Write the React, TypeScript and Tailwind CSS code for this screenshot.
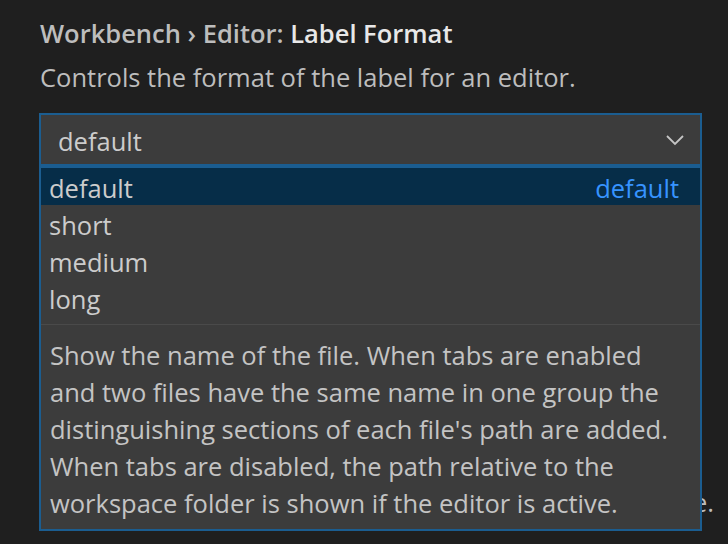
import React from "react";

const lines = [
  "Show the name of the file. When tabs are enabled",
  "and two files have the same name in one group the",
  "distinguishing sections of each file's path are added.",
  "When tabs are disabled, the path relative to the",
  "workspace folder is shown if the editor is active.",
];

const options = ["default", "short", "medium", "long"];

export default function App() {
  return (
    <div className="relative w-[728px] h-[544px] overflow-hidden bg-[#1f1f1f] pl-[39px] pr-[26px] pt-[18px] font-['Open_Sans',sans-serif] text-[25.5px]">
      <div className="h-[30px] leading-[30px] pl-px font-semibold whitespace-nowrap">
        <span className="text-[#bdbdbd]">Workbench › Editor: </span>
        <span className="text-[#e8e8e8]">Label Format</span>
      </div>
      <div className="mt-[14px] h-[30px] leading-[30px] pl-px text-[#bdbdbd] whitespace-nowrap">
        Controls the format of the label for an editor.
      </div>

      <span className="absolute right-[14px] top-[484px] leading-[37px] text-[#bdbdbd] whitespace-nowrap">
        e.
      </span>

      <div className="relative z-10 mt-[21px]">
        <div className="flex h-[53px] items-center justify-between border-2 border-[#1b5d90] bg-[#3c3c3c] pl-[17px] pr-[16px] pt-[2px] text-[#cccccc]">
          <span className="leading-[30px]">default</span>
          <svg width="18" height="11" viewBox="0 0 18 11">
            <polyline points="1,1 9,9 17,1" fill="none" stroke="#c5c5c5" strokeWidth="1.8" />
          </svg>
        </div>

        <div className="absolute left-0 right-0 top-full flex h-[365px] flex-col border-2 border-[#1b5d90] bg-[#3c3c3c] text-[#cccccc]">
          <div className="flex flex-col pb-[8px]">
            {options.map((o, i) => (
              <div
                key={o}
                className={
                  i === 0
                    ? "flex h-[37px] items-center justify-between bg-[#062d48] pl-[8px] pr-[21px] pt-[4px]"
                    : "flex h-[37px] items-center pl-[8px] pr-[21px] pt-[4px]"
                }
              >
                <span>{o}</span>
                {i === 0 && <span className="text-[#3794ff]">default</span>}
              </div>
            ))}
          </div>
          <div className="border-t border-[#4a4a4a] pl-[9px] pt-[12px]">
            {lines.map((l) => (
              <div key={l} className="h-[37px] leading-[37px] whitespace-nowrap text-[#c4c4c4]">
                {l}
              </div>
            ))}
          </div>
        </div>
      </div>
    </div>
  );
}
